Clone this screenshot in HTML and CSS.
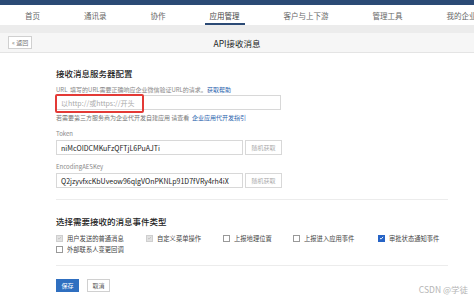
FILE: index.html
```html
<!DOCTYPE html>
<html lang="zh-CN">
<head>
<meta charset="utf-8">
<link rel="stylesheet" href="styles.css">
</head>
<body>
<div class="topbar"></div>
<nav class="nav">
  <span class="nav-item">首页</span>
  <span class="nav-item">通讯录</span>
  <span class="nav-item">协作</span>
  <span class="nav-item active">应用管理</span>
  <span class="nav-item">客户与上下游</span>
  <span class="nav-item">管理工具</span>
  <span class="nav-item">我的企业</span>
</nav>
<div class="band"></div>
<div class="header">
  <span class="back">« 返回</span>
  <span class="title">API接收消息</span>
</div>
<main class="content">
  <h2 class="section">接收消息服务器配置</h2>
  <div class="label url-label">URL&nbsp;&nbsp;填写的URL需要正确响应企业微信验证URL的请求。<a class="link">获取帮助</a></div>
  <div class="field">
    <div class="input url"><span class="placeholder">以http://或https://开头</span><div class="mark"></div></div>
  </div>
  <div class="hint">若需要第三方服务商为企业代开发自建应用 请查看&nbsp;&nbsp;<a class="link">企业应用代开发指引</a></div>

  <div class="label token-label">Token</div>
  <div class="field">
    <div class="input short">niMcOIDCMKuFzQFTjL6PuAJTi</div>
    <span class="rand">随机获取</span>
  </div>
  <div class="label key-label">EncodingAESKey</div>
  <div class="field">
    <div class="input short">Q2jzyvfxcKbUveow96qlgVOnPKNLp91D7fVRy4rh4iX</div>
    <span class="rand">随机获取</span>
  </div>
  <hr class="divider first">

  <h2 class="section events">选择需要接收的消息事件类型</h2>
  <div class="checks">
    <label class="check c1"><span class="box disabled"><svg viewBox="0 0 8 8"><path d="M1.6 4.2 L3.3 5.8 L6.5 2.2" fill="none" stroke="#bbb" stroke-width="1.2"/></svg></span>用户发送的普通消息</label>
    <label class="check c2"><span class="box disabled"><svg viewBox="0 0 8 8"><path d="M1.6 4.2 L3.3 5.8 L6.5 2.2" fill="none" stroke="#bbb" stroke-width="1.2"/></svg></span>自定义菜单操作</label>
    <label class="check c3"><span class="box"></span>上报地理位置</label>
    <label class="check c4"><span class="box"></span>上报进入应用事件</label>
    <label class="check c5"><span class="box on"><svg viewBox="0 0 8 8"><path d="M1.6 4.2 L3.3 5.8 L6.5 2.2" fill="none" stroke="#fff" stroke-width="1.4"/></svg></span>审批状态通知事件</label>
    <label class="check"><span class="box"></span>外部联系人变更回调</label>
  </div>
  <hr class="divider second">
  <div class="actions">
    <span class="btn primary">保存</span>
    <span class="btn">取消</span>
  </div>
</main>
<div class="watermark">CSDN @学徒</div>
</body>
</html>
```
FILE: styles.css
```css
* { box-sizing: border-box; }
html, body { margin: 0; padding: 0; }
body {
  width: 474px;
  height: 302px;
  overflow: hidden;
  background: #fff;
  font-family: "Noto Sans CJK SC", "Liberation Sans", sans-serif;
  color: #333;
  position: relative;
}
.topbar { height: 5px; background: #2b4a75; }
.nav {
  height: 20px;
  display: flex;
  align-items: stretch;
  background: #fff;
  font-size: 7.5px;
  color: #666;
  padding-left: 20px;
  gap: 34px;
  overflow: hidden;
  white-space: nowrap;
}
.nav-item {
  flex: none;
  display: flex;
  align-items: center;
  padding: 0 5px;
  position: relative;
}
.nav-item.active { color: #444; }
.nav-item.active::after {
  content: "";
  position: absolute;
  left: 0;
  right: 0;
  bottom: 0;
  height: 2px;
  background: #2b4a75;
}
.band { height: 8px; background: #ececec; }
.header {
  height: 20px;
  background: #f6f6f6;
  border-bottom: 1px solid #e4e4e4;
  display: flex;
  align-items: center;
  padding-left: 8px;
  position: relative;
}
.back {
  font-size: 6px;
  color: #777;
  border: 1px solid #d0d0d0;
  background: #fff;
  height: 13px;
  display: flex;
  align-items: center;
  padding: 0 3px;
}
.title {
  position: absolute;
  left: 0;
  right: 0;
  text-align: center;
  font-size: 8.5px;
  color: #222;
  pointer-events: none;
}
.content { padding: 0 0 0 56px; }
.section {
  margin: 0;
  font-size: 8.5px;
  font-weight: 500;
  color: #222;
  height: 14px;
  display: flex;
  align-items: center;
  margin-top: 13px;
}
.label, .hint {
  font-size: 6px;
  color: #888;
  height: 8px;
  display: flex;
  align-items: center;
  white-space: nowrap;
}
.hint { color: #777; margin-top: 3px; }
.url-label { margin-top: 5px; }
.token-label { margin-top: 8px; }
.key-label { margin-top: 7px; }
.link { color: #2a63ad; }
.field {
  display: flex;
  align-items: center;
  margin-top: 2px;
  gap: 2px;
  height: 15px;
}
.label + .field { margin-top: 3px; }
.url-label + .field { margin-top: 2px; }
.input {
  height: 15px;
  border: 1px solid #d8d8d8;
  font-size: 7px;
  display: flex;
  align-items: center;
  padding-left: 4px;
  color: #222;
  position: relative;
  white-space: nowrap;
}
.input.url { width: 225px; }
.input.short { width: 187px; }
.placeholder { color: #aaa; }
.mark {
  position: absolute;
  left: -2px;
  top: -2px;
  width: 89px;
  height: 19px;
  border: 2px solid #e33a36;
  border-radius: 2px;
}
.rand {
  width: 37px;
  height: 15px;
  border: 1px solid #d8d8d8;
  font-size: 6px;
  color: #aaa;
  display: flex;
  align-items: center;
  justify-content: center;
}
.divider {
  border: 0;
  border-top: 1px solid #ececec;
  margin: 0;
  width: 392px;
}
.divider.first { margin-top: 11px; }
.events { margin-top: 14px; }
.checks {
  display: flex;
  flex-wrap: wrap;
  margin-top: 6px;
  width: 400px;
  row-gap: 3px;
  font-size: 6.3px;
  color: #444;
}
.check {
  display: flex;
  align-items: center;
  height: 8px;
  gap: 4px;
  white-space: nowrap;
}
.c1 { width: 90px; }
.c2 { width: 77px; }
.c3 { width: 70px; }
.c4 { width: 85px; }
.c5 { width: 75px; }
.box {
  width: 7px;
  height: 7px;
  border: 1px solid #999;
  background: #fff;
  display: inline-flex;
  align-items: center;
  justify-content: center;
  flex: none;
}
.box svg { width: 6px; height: 6px; display: block; }
.box.disabled { background: #e2e2e2; border-color: #cfcfcf; }
.box.on { background: #2764c6; border-color: #2764c6; }
.divider.second { margin-top: 12px; }
.actions {
  display: flex;
  gap: 8px;
  margin-top: 13px;
}
.btn {
  width: 23px;
  height: 13px;
  border: 1px solid #d0d0d0;
  font-size: 6px;
  display: flex;
  align-items: center;
  justify-content: center;
  color: #555;
  background: #fff;
}
.btn.primary { background: #2f6fc0; border-color: #2f6fc0; color: #fff; }
.watermark {
  position: absolute;
  right: 6px;
  bottom: 7px;
  font-size: 8.5px;
  color: #b5b5b5;
}
```
